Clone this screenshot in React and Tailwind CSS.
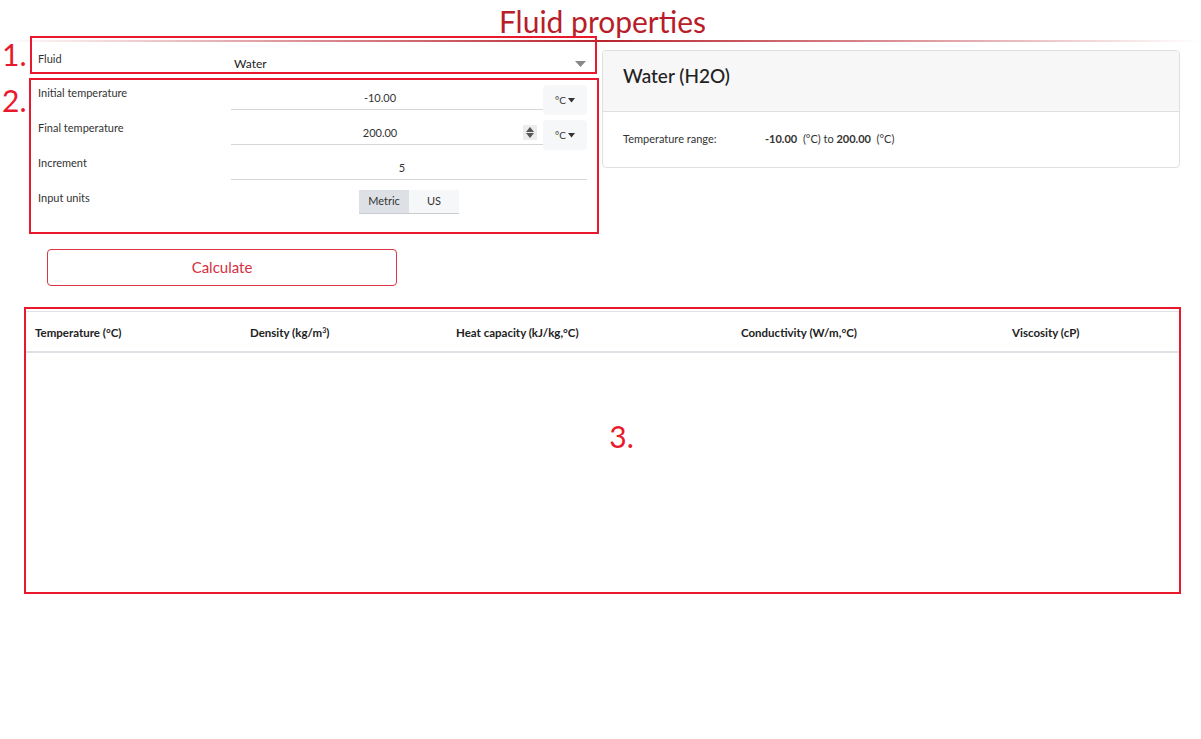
import { useState } from "react";

const font = { fontFamily: "Lato, 'Noto Sans', sans-serif" };

function UnitButton() {
  return (
    <button className="w-[44px] h-[30px] bg-[#f6f7f8] rounded text-[10px] text-[#333] flex items-center justify-center gap-[2px]">
      °C
      <svg width="7" height="5" viewBox="0 0 7 5"><path d="M0 0h7L3.5 4.5z" fill="#333" /></svg>
    </button>
  );
}

function Spinner() {
  return (
    <div className="w-[14px] h-[15px] bg-[#ececec] flex flex-col items-center justify-center gap-[1px] mr-[6px]">
      <svg width="8" height="5" viewBox="0 0 8 5"><path d="M0 5L4 0l4 5z" fill="#555" /></svg>
      <svg width="8" height="5" viewBox="0 0 8 5"><path d="M0 0h8L4 5z" fill="#555" /></svg>
    </div>
  );
}

function Row({ label, children }) {
  return (
    <div className="flex h-[35px]">
      <div className="w-[193px] text-[11px] text-[#333] leading-[15px]">{label}</div>
      <div className="flex-1 flex items-start">{children}</div>
    </div>
  );
}

export default function App() {
  const [units, setUnits] = useState("metric");

  const columnas = [
    { label: "Temperature (°C)", w: "w-[215px]" },
    { label: <>Density (kg/m<sup className="text-[7px]">3</sup>)</>, w: "w-[206px]" },
    { label: "Heat capacity (kJ/kg,°C)", w: "w-[285px]" },
    { label: "Conductivity (W/m,°C)", w: "w-[271px]" },
    { label: "Viscosity (cP)", w: "flex-1" },
  ];

  return (
    <div className="w-[1201px] h-[739px] bg-white text-[#212529] overflow-hidden" style={font}>
      {/* Title */}
      <div className="h-[40px] flex items-end justify-center">
        <h1 className="text-[30px] leading-[38px] text-[#b81d2a] font-normal pl-[4px]">Fluid properties</h1>
      </div>
      <div className="h-[2px] bg-linear-to-r from-transparent via-[#b8252f] to-transparent" />

      <div className="flex -mt-[6px]">
        {/* Left side */}
        <div className="w-[602px] flex flex-col">
          <div className="flex">
            <span className="w-[30px] text-[30px] leading-[32px] text-[#e8192c] pl-[2px] pt-[2px]">1.</span>
            <div className="w-[567px] h-[38px] border-2 border-[#e8192c] flex pl-[6px] pr-[9px]">
              <div className="w-[193px] pt-[13px] text-[11px] leading-[15px] text-[#333]">Fluid</div>
              <div className="flex-1 flex items-center justify-between pt-[22px] pb-[4px]">
                <span className="text-[12px] pl-[3px] text-[#222]">Water</span>
                <svg width="11" height="6" viewBox="0 0 11 6"><path d="M0 0h11L5.5 6z" fill="#888" /></svg>
              </div>
            </div>
          </div>

          <div className="flex mt-[4px]">
            <span className="w-[29px] text-[30px] leading-[32px] text-[#e8192c] pl-[2px] pt-[6px]">2.</span>
            <div className="w-[570px] h-[156px] border-2 border-[#e8192c] pl-[7px] pr-[10px] pt-[5px]">
              <Row label="Initial temperature">
                <div className="flex-1 h-[25px] border-b border-[#d4d6da] flex items-center justify-center pr-[14px] pt-[2px] text-[11px] text-[#333]">-10.00</div>
                <UnitButton />
              </Row>
              <Row label="Final temperature">
                <div className="flex-1 h-[25px] border-b border-[#d4d6da] flex items-center text-[11px] text-[#333]">
                  <span className="flex-1 text-center pl-[6px] pt-[2px]">200.00</span>
                  <Spinner />
                </div>
                <UnitButton />
              </Row>
              <Row label="Increment">
                <div className="flex-1 h-[25px] border-b border-[#d4d6da] flex items-center justify-center pr-[14px] pt-[2px] text-[11px] text-[#333]">5</div>
              </Row>
              <Row label="Input units">
                <div className="flex-1 flex justify-center">
                  <div className="flex h-[24px] border-b border-[#c8ccd0] text-[11px] text-[#333]">
                    <button
                      onClick={() => setUnits("metric")}
                      className={`w-[50px] ${units === "metric" ? "bg-[#dde1e6]" : "bg-[#f6f7f9]"}`}
                    >
                      Metric
                    </button>
                    <button
                      onClick={() => setUnits("us")}
                      className={`w-[50px] ${units === "us" ? "bg-[#dde1e6]" : "bg-[#f6f7f9]"}`}
                    >
                      US
                    </button>
                  </div>
                </div>
              </Row>
            </div>
          </div>

          <div className="pl-[47px] pt-[15px]">
            <button className="w-[350px] h-[37px] border border-[#dc3545] rounded text-[15px] text-[#d6303f] font-normal">
              Calculate
            </button>
          </div>
        </div>

        {/* Right card */}
        <div className="w-[578px] mt-[14px] h-[118px] border border-[#e0e0e0] rounded flex flex-col self-start">
          <div className="h-[61px] bg-[#f7f7f7] border-b border-[#e0e0e0] flex items-start pt-[11px] px-[20px] rounded-t">
            <span className="text-[19px] font-medium text-[#222]">Water (H2O)</span>
          </div>
          <div className="flex-1 flex items-center px-[20px] text-[11px] text-[#333]">
            <span className="w-[142px]">Temperature range:</span>
            <span>
              <b>-10.00</b>&nbsp; (°C) to <b>200.00</b>&nbsp; (°C)
            </span>
          </div>
        </div>
      </div>

      {/* Results table */}
      <div className="ml-[24px] mt-[21px] w-[1157px] h-[287px] border-2 border-[#e8192c] pt-[2px] flex flex-col">
        <div className="flex h-[42px] border-t border-[#dee2e6] border-b-2 border-b-[#dee2e6] items-center text-[11.5px] font-bold text-[#222] pt-[2px]">
          {columnas.map((c, i) => (
            <div key={i} className={`${c.w} pl-[9px]`}>{c.label}</div>
          ))}
        </div>
        <div className="flex-1 flex justify-center pt-[66px]">
          <span className="text-[30px] leading-[34px] text-[#e8192c] pl-[38px]">3.</span>
        </div>
      </div>
    </div>
  );
}
